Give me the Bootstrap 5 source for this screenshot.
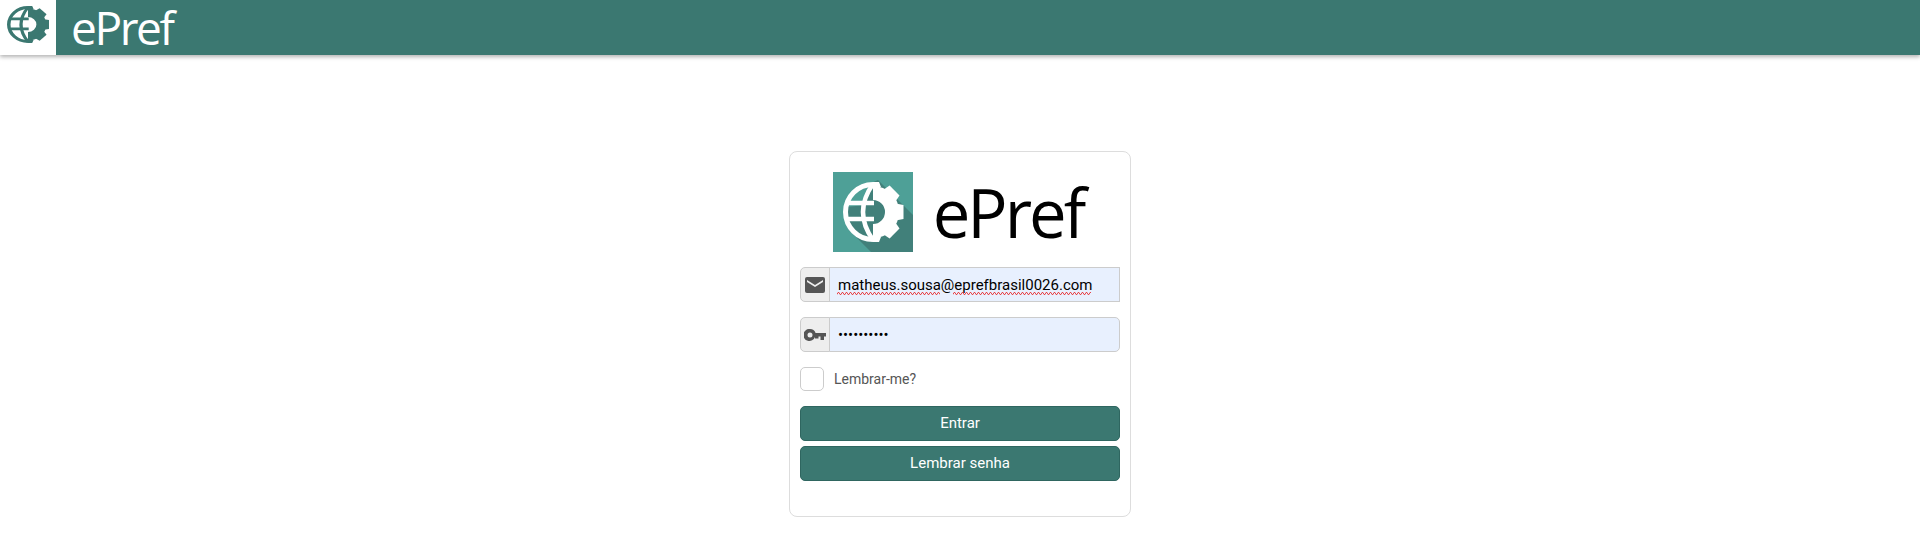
<!DOCTYPE html>
<html lang="pt-BR">
<head>
<meta charset="utf-8">
<title>ePref</title>
<link href="https://cdn.jsdelivr.net/npm/bootstrap@5.3.0/dist/css/bootstrap.min.css" rel="stylesheet">
<style>
html,body{height:541px;overflow:hidden}
body{font-family:Roboto,sans-serif;background:#fff;color:#555}
.topbar{height:55px;background:#3b7871;box-shadow:0 2px 4px rgba(0,0,0,.3)}
.topbar-logo{width:56px;background:#fff;color:#3b7871;padding-top:6px}
.topbar-name{font-family:"Open Sans",sans-serif;font-size:46px;line-height:54px;color:#fff;margin-left:15px;padding-right:6px;letter-spacing:-2.4px}
.login-box{width:342px;height:366px;margin-top:96px;border:1px solid #ddd;border-radius:8px;padding:20px 10px 0}
.brand-row{margin-bottom:15px}
.brand-name{font-family:"Open Sans",sans-serif;font-size:67px;line-height:80px;color:#000;margin-left:20px;padding-right:4px;letter-spacing:-3px}
.brand-tile{width:80px;height:80px}
.field{height:35px;margin-bottom:15px;position:relative}
.field .input-group-text{width:30px;padding:0;justify-content:center;background:#eee;border-color:#ccc;border-radius:5px 0 0 5px}
.field .form-control{background:#e8f0fe;border-color:#ccc;border-radius:0 5px 5px 0;font-size:15px;font-family:Roboto,sans-serif;color:#000;padding:0 8px;height:35px}
.squiggle{position:absolute;top:25px;height:3px;pointer-events:none}
.remember{height:24px;margin-bottom:15px}
.remember .form-check-input{width:24px;height:24px;margin:0;border-radius:5px;border-color:#ccc;flex:none}
.remember label{font-size:14px;color:#555;margin-left:10px}
.btn-stack{gap:5px}
.act-btn{background:#3b7871;border:1px solid #2f6660;color:#fff;font-size:15px;font-weight:400;height:35px;padding:0;border-radius:5px}
.act-btn:hover{background:#336a64;color:#fff}
</style>
</head>
<body>
<svg width="0" height="0" class="position-absolute">
  <defs>
    <symbol id="globe-gear" viewBox="0 0 80 80" preserveAspectRatio="none">
      <g fill="none" stroke="currentColor" stroke-width="5">
        <path d="M40 12.500A27.500 27.500 0 0 0 40 67.500"/>
        <path d="M15 31H41M15 47H41" stroke-width="4.500"/>
        <path d="M40 12Q20 40 40 68" stroke-width="4.500"/>
        <path d="M40 21A19 19 0 0 1 40 59" stroke-width="14"/>
      </g>
      <g fill="currentColor">
        <path d="M60 31L70.500 33V47L60 49Z"/>
        <path d="M60 31L70.500 33V47L60 49Z" transform="rotate(45 40 40)"/>
        <path d="M60 31L70.500 33V47L60 49Z" transform="rotate(-45 40 40)"/>
        <path d="M40 10H46L48 15H40ZM40 70H46L48 65H40Z"/>
      </g>
    </symbol>
    <pattern id="wave" width="4" height="3" patternUnits="userSpaceOnUse">
      <path d="M0 2.500L1 .5H2L3 2.500H4" fill="none" stroke="#e8454a" stroke-width="1"/>
    </pattern>
  </defs>
</svg>

<header class="topbar d-flex align-items-stretch">
  <div class="topbar-logo d-flex align-items-start justify-content-center">
    <svg width="42" height="37" viewBox="10 10 60 60" preserveAspectRatio="none" aria-hidden="true"><use href="#globe-gear" width="80" height="80"/></svg>
  </div>
  <span class="topbar-name">ePref</span>
</header>

<main class="d-flex justify-content-center">
  <form class="login-box bg-white">
    <div class="brand-row d-flex justify-content-center align-items-center">
      <svg class="brand-tile" viewBox="0 0 80 80" aria-hidden="true">
        <rect width="80" height="80" fill="#4ea097"/>
        <path d="M45 8L80 43V80H38L19 61L13 35L33 33L36 12Z" fill="#41807a"/>
        <use href="#globe-gear" width="80" height="80" color="#fff"/>
      </svg>
      <span class="brand-name">ePref</span>
    </div>
    <div class="input-group field">
      <span class="input-group-text">
        <svg width="20" height="16" viewBox="0 0 20 16" aria-hidden="true"><path fill="#555" d="M2 0H18A2 2 0 0 1 20 2V14A2 2 0 0 1 18 16H2A2 2 0 0 1 0 14V2A2 2 0 0 1 2 0ZM2 3V5L10 10L18 5V3L10 8Z" fill-rule="evenodd"/></svg>
      </span>
      <input class="form-control" type="email" value="matheus.sousa@eprefbrasil0026.com" aria-label="E-mail">
      <svg class="squiggle" style="left:38px;width:103px" aria-hidden="true"><rect width="103" height="3" fill="url(#wave)"/></svg>
      <svg class="squiggle" style="left:154px;width:138px" aria-hidden="true"><rect width="138" height="3" fill="url(#wave)"/></svg>
    </div>
    <div class="input-group field">
      <span class="input-group-text">
        <svg width="22" height="12" viewBox="0 0 22 12" aria-hidden="true"><path fill="#555" fill-rule="evenodd" d="M6 0A6 6 0 0 1 11.600 4H22V7.500H20V11H16.500V7.500H14.500V9.500H11V8A6 6 0 1 1 6 0ZM6 3.500A2.500 2.500 0 1 0 6 8.500A2.500 2.500 0 0 0 6 3.500Z"/></svg>
      </span>
      <input class="form-control" type="password" value="1234567890" aria-label="Senha">
    </div>
    <div class="remember d-flex align-items-center">
      <input class="form-check-input" type="checkbox" id="remember-me">
      <label for="remember-me">Lembrar-me?</label>
    </div>
    <div class="d-grid btn-stack">
      <button type="button" class="btn act-btn">Entrar</button>
      <button type="button" class="btn act-btn">Lembrar senha</button>
    </div>
  </form>
</main>
<script src="https://cdn.jsdelivr.net/npm/bootstrap@5.3.0/dist/js/bootstrap.bundle.min.js"></script>
</body>
</html>
